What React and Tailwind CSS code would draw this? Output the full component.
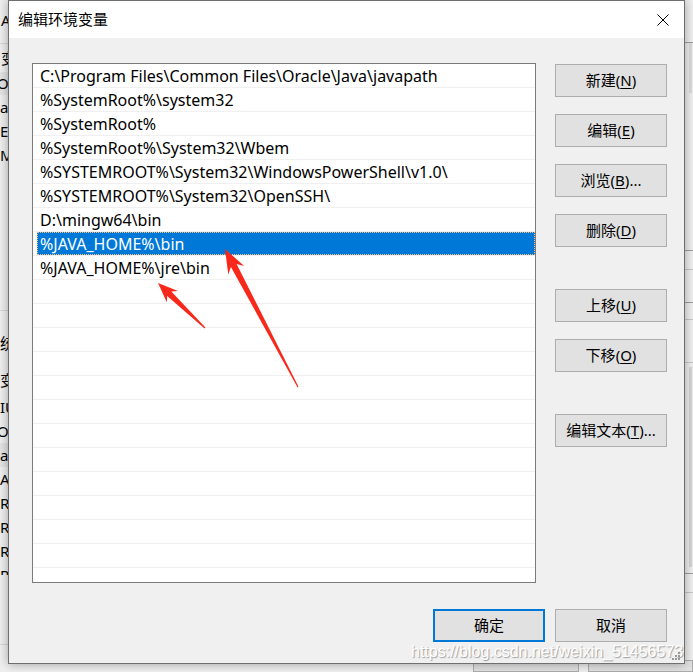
import React from "react";

const paths = [
  "C:\\Program Files\\Common Files\\Oracle\\Java\\javapath",
  "%SystemRoot%\\system32",
  "%SystemRoot%",
  "%SystemRoot%\\System32\\Wbem",
  "%SYSTEMROOT%\\System32\\WindowsPowerShell\\v1.0\\",
  "%SYSTEMROOT%\\System32\\OpenSSH\\",
  "D:\\mingw64\\bin",
  "%JAVA_HOME%\\bin",
  "%JAVA_HOME%\\jre\\bin",
];

const font = "font-['Noto_Sans','Noto_Sans_CJK_SC',sans-serif]";

// tapered arrow, tail -> tip
function arrowPoints(x1, y1, x2, y2, head = 22, hw = 8, sw = 3) {
  const len = Math.hypot(x2 - x1, y2 - y1);
  const dx = (x2 - x1) / len;
  const dy = (y2 - y1) / len;
  const nx = -dy;
  const ny = dx;
  const bx = x2 - dx * head;
  const by = y2 - dy * head;
  const kx = x2 - dx * head * 0.78;
  const ky = y2 - dy * head * 0.78;
  const pts = [
    [x2, y2],
    [bx + nx * hw, by + ny * hw],
    [kx + nx * sw, ky + ny * sw],
    [x1 + nx * 0.6, y1 + ny * 0.6],
    [x1 - nx * 0.6, y1 - ny * 0.6],
    [kx - nx * sw, ky - ny * sw],
    [bx - nx * hw, by - ny * hw],
  ];
  return pts.map((p) => p.join(",")).join(" ");
}

const Btn = ({ label, k, rest = "", primary = false }) => (
  <button
    className={
      primary
        ? "h-[33px] w-[112px] border-2 border-[#0078d7] bg-[#e1e1e1] text-[15px] text-black"
        : "h-[33px] w-[112px] border border-[#adadad] bg-[#e1e1e1] text-[15px] text-black"
    }
  >
    {label}
    {k && (
      <>
        (<span className="underline underline-offset-2">{k}</span>){rest}
      </>
    )}
  </button>
);

const BgLeft = () => (
  <div className="w-[8px] overflow-hidden text-[15px] leading-[24px] text-black">
    <div className="h-[32px] pt-[8px] pl-[1px]">A</div>
    <div className="h-[12px] border-b border-[#d9d9d9]"></div>
    <div className="h-[28px] pt-[2px] pl-[1px]">变</div>
    <div className="h-[23px] bg-[#e5e5e5] -ml-[3px] leading-[23px]">Or</div>
    <div className="h-[24px]">a</div>
    <div className="h-[24px]">E</div>
    <div className="h-[24px]">M</div>
    <div className="h-[144px] border-b border-[#d9d9d9]"></div>
    <div className="h-[44px] pt-[20px]">统</div>
    <div className="h-[37px] pt-[13px]">变</div>
    <div className="h-[27px] pt-[3px]">IU</div>
    <div className="h-[24px] -ml-[3px]">OS</div>
    <div className="h-[24px] bg-[#e5e5e5]">a</div>
    <div className="h-[24px]">A</div>
    <div className="h-[24px]">R</div>
    <div className="h-[24px]">R</div>
    <div className="h-[24px]">R</div>
    <div className="h-[12px] overflow-hidden">R</div>
    <div className="h-[70px] border-b border-[#d9d9d9]"></div>
  </div>
);

const BgRight = () => (
  <div className="w-[9px] flex flex-col">
    <div className="h-[43px] border-b border-[#a0a0a0]"></div>
    <div className="h-[55px] flex justify-end pr-[1px]">
      <div className="w-[3px] h-[50px] bg-[#dcdcdc]"></div>
    </div>
    <div className="h-[153px] border-b border-[#a0a0a0]"></div>
    <div className="h-[19px] border-b border-[#c8c8c8]"></div>
    <div className="h-[33px] border-b border-[#a0a0a0]"></div>
    <div className="h-[17px] border-b border-[#c8c8c8]"></div>
    <div className="h-[43px] border-b border-[#c8c8c8]"></div>
    <div className="h-[210px] flex justify-end pr-[1px]">
      <div className="w-[3px] h-[200px] mt-[4px] bg-[#d6d6d6]"></div>
    </div>
    <div className="h-[19px] border-t border-[#a0a0a0]"></div>
    <div className="flex-1 border-t border-[#c8c8c8]"></div>
  </div>
);

export default function App() {
  return (
    <div className={`relative h-[672px] w-[693px] overflow-hidden bg-[#f0f0f0] ${font}`}>
      {/* window behind */}
      <div className="flex h-full flex-col">
        <div className="flex h-[664px]">
          <BgLeft />
          <div className="flex-1"></div>
          <BgRight />
        </div>
        <div className="flex flex-1 pl-[473px] gap-[9px] pt-[1px]">
          <div className="w-[111px] h-[12px] border border-[#adadad] bg-[#e1e1e1]"></div>
          <div className="w-[111px] h-[12px] border border-[#adadad] bg-[#e1e1e1]"></div>
        </div>
      </div>

      {/* dialog */}
      <div className="absolute left-[8px] top-0 flex h-[664px] w-[677px] flex-col border border-[#6f6f6f] bg-[#f0f0f0] shadow-[0_0_10px_rgba(0,0,0,0.35)]">
        <div className="flex h-[37px] items-center justify-between bg-white pl-[9px] pr-[15px]">
          <span className="text-[15px] text-black">编辑环境变量</span>
          <svg width="12" height="12" viewBox="0 0 12 12" className="mt-[1px]">
            <path d="M0.5 0.5 L11.5 11.5 M11.5 0.5 L0.5 11.5" stroke="#000" strokeWidth="1" />
          </svg>
        </div>

        <div className="flex flex-1 flex-col pl-[23px] pr-[17px] pt-[25px]">
          <div className="flex gap-[19px]">
            <div className="h-[520px] w-[504px] overflow-hidden border border-[#7a7a7a] bg-white">
              {Array.from({ length: 22 }).map((_, i) => {
                const text = paths[i];
                const sel = i === 7;
                return (
                  <div key={i} className="h-[24px] border-b border-[#f0f0f0] pl-[4px]">
                    <div
                      className={
                        sel
                          ? "h-[23px] border border-dotted border-[#f6c07a] bg-[#0078d7] pl-[2px] pt-[1px] text-[16px] leading-[21px] text-white"
                          : "h-[23px] pl-[3px] pt-[1px] text-[16px] leading-[23px] text-black"
                      }
                    >
                      {text}
                    </div>
                  </div>
                );
              })}
            </div>

            <div className="flex flex-col pt-[1px]">
              <div className="flex flex-col gap-[17px]">
                <Btn label="新建" k="N" />
                <Btn label="编辑" k="E" />
                <Btn label="浏览" k="B" rest="..." />
                <Btn label="删除" k="D" />
              </div>
              <div className="mt-[42px] flex flex-col gap-[17px]">
                <Btn label="上移" k="U" />
                <Btn label="下移" k="O" />
              </div>
              <div className="mt-[42px]">
                <Btn label="编辑文本" k="T" rest="..." />
              </div>
            </div>
          </div>

          <div className="mt-[26px] flex justify-end gap-[10px]">
            <Btn label="确定" primary />
            <Btn label="取消" />
          </div>
        </div>
      </div>

      {/* annotations */}
      <svg className="pointer-events-none absolute left-0 top-0" width="693" height="672">
        <polygon points={arrowPoints(298, 387, 225, 249, 24, 9, 3.2)} fill="#f8281a" />
        <polygon points={arrowPoints(205, 328, 158, 283, 20, 8, 3)} fill="#f8281a" />
      </svg>

      {/* watermark */}
      <div className="pointer-events-none absolute left-[411px] top-[642px] font-['Liberation_Sans',sans-serif] text-[16px] leading-[20px] text-white [text-shadow:1px_1px_1px_rgba(0,0,0,0.35)]">
        https://blog.csdn.net/weixin_51456573
      </div>
      <div className="pointer-events-none absolute left-[672px] top-[652px] grid grid-cols-3 gap-[1px]">
        <span></span>
        <span></span>
        <span className="h-[2px] w-[2px] bg-[#999]"></span>
        <span></span>
        <span className="h-[2px] w-[2px] bg-[#999]"></span>
        <span className="h-[2px] w-[2px] bg-[#999]"></span>
        <span className="h-[2px] w-[2px] bg-[#999]"></span>
        <span className="h-[2px] w-[2px] bg-[#999]"></span>
        <span className="h-[2px] w-[2px] bg-[#999]"></span>
      </div>
    </div>
  );
}
